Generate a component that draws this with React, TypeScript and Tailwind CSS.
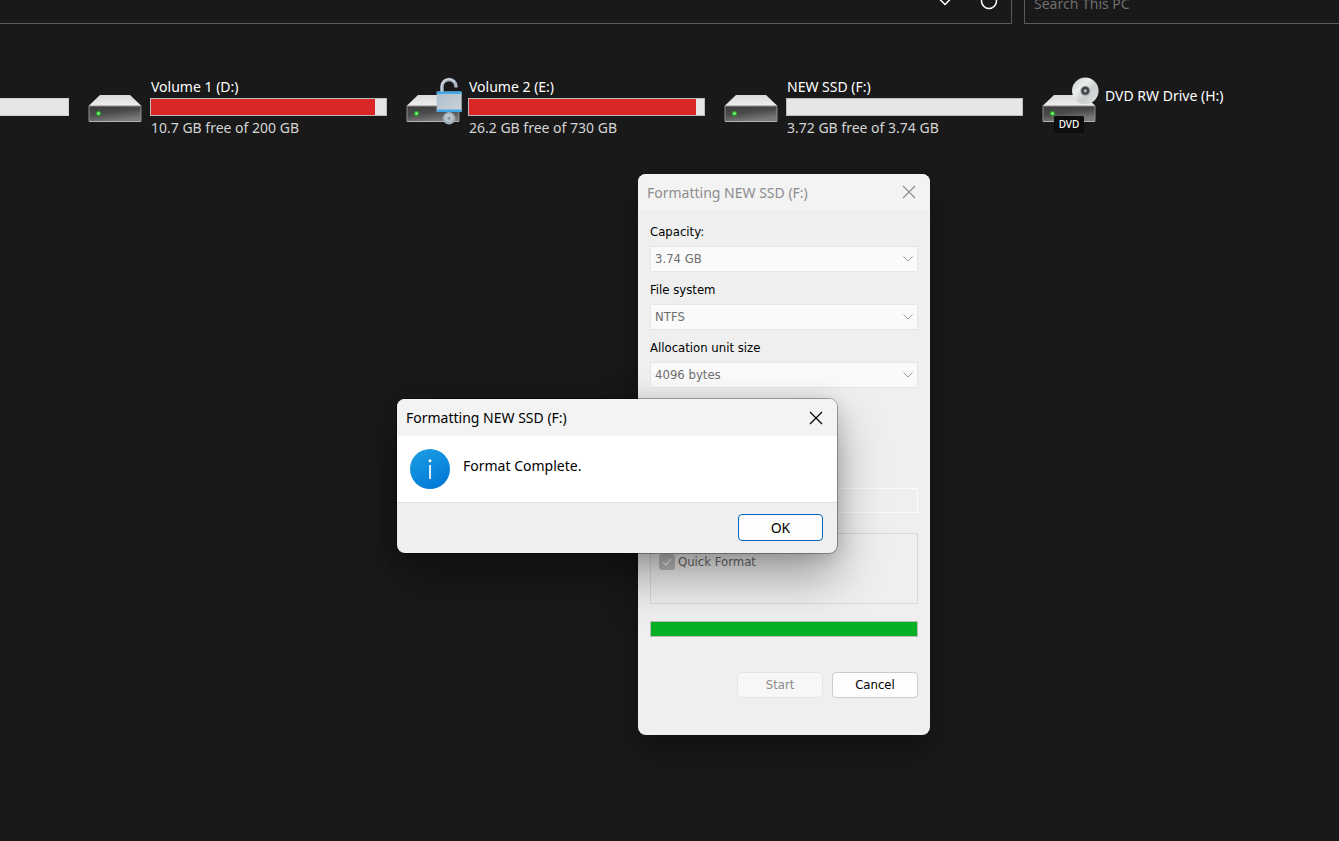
import type { ReactNode } from "react";

type Drive = {
  name: string;
  caption: string;
  used: number;
  locked?: boolean;
};

const drives: Drive[] = [
  { name: "Volume 1 (D:)", caption: "10.7 GB free of 200 GB", used: 95.5 },
  { name: "Volume 2 (E:)", caption: "26.2 GB free of 730 GB", used: 96.5, locked: true },
  { name: "NEW SSD (F:)", caption: "3.72 GB free of 3.74 GB", used: 0 },
];

const formatFields = [
  { id: "capacity", label: "Capacity:", value: "3.74 GB" },
  { id: "file-system", label: "File system", value: "NTFS" },
  { id: "allocation", label: "Allocation unit size", value: "4096 bytes" },
];

function DriveIcon({ id, children }: { id: string; children?: ReactNode }) {
  return (
    <svg viewBox="0 0 58 60" className="-mr-1 h-[60px] w-[58px] shrink-0" aria-hidden="true">
      <defs>
        <linearGradient id={`${id}-top`} x1="0" y1="0" x2="0" y2="1">
          <stop offset="0" stopColor="#d9d9dc" />
          <stop offset="1" stopColor="#efeff1" />
        </linearGradient>
        <linearGradient id={`${id}-front`} x1="0" y1="0" x2="0.4" y2="1">
          <stop offset="0" stopColor="#3c3c3c" />
          <stop offset="0.5" stopColor="#4a4a4a" />
          <stop offset="1" stopColor="#7a7a7a" />
        </linearGradient>
        <radialGradient id={`${id}-led`}>
          <stop offset="0" stopColor="#b8ffb0" />
          <stop offset="0.45" stopColor="#2fd22f" />
          <stop offset="1" stopColor="#1a7a1a" stopOpacity="0" />
        </radialGradient>
      </defs>
      <path d="M12 18h30l11.500 11H0.500z" fill={`url(#${id}-top)`} />
      <rect x="1" y="29" width="52" height="15.500" rx="0.5" fill={`url(#${id}-front)`} stroke="#8f8f8f" />
      <path d="M1 44.500h52" stroke="#b4b4b4" />
      <circle cx="10.500" cy="36.500" r="3.4" fill={`url(#${id}-led)`} />
      {children}
    </svg>
  );
}

function OpenPadlock() {
  return (
    <g>
      <defs>
        <linearGradient id="lock-body" x1="0" y1="0" x2="1" y2="1">
          <stop offset="0" stopColor="#a9bccb" />
          <stop offset="1" stopColor="#cfd3d8" />
        </linearGradient>
      </defs>
      <path d="M36 15.500V9.500a7 7 0 0 1 14 0v1" fill="none" stroke="#a9b4c4" strokeWidth="3.4" />
      <path d="M35.500 14.500V9a7.500 7.500 0 0 1 13-4.500" fill="none" stroke="#d5dce6" strokeWidth="1.2" />
      <rect x="30.700" y="14.500" width="25" height="20.500" rx="0.8" fill="url(#lock-body)" />
      <rect x="30.700" y="14.500" width="25" height="2.400" fill="#3fa9e8" />
      <rect x="30.700" y="32.600" width="25" height="2.400" fill="#3fa9e8" />
      <circle cx="43" cy="41.300" r="6.200" fill="#a3b0ba" />
      <circle cx="43" cy="40.800" r="4" fill="#bcc7cf" />
      <circle cx="43" cy="41.300" r="1.500" fill="#8694a0" />
    </g>
  );
}

function Disc() {
  return (
    <g>
      <defs>
        <linearGradient id="disc-face" x1="0" y1="0" x2="1" y2="1">
          <stop offset="0" stopColor="#c3c8c8" />
          <stop offset="0.35" stopColor="#eceeee" />
          <stop offset="0.6" stopColor="#c7cccc" />
          <stop offset="1" stopColor="#e6e8e8" />
        </linearGradient>
      </defs>
      <circle cx="43.300" cy="13.800" r="13.300" fill="url(#disc-face)" />
      <circle cx="43.300" cy="13.800" r="4.800" fill="#7d8485" />
      <circle cx="43.300" cy="13.800" r="3.700" fill="#3c4244" />
      <circle cx="43.300" cy="13.800" r="1.700" fill="#a9afb0" />
      <rect x="12" y="39" width="30" height="17" rx="1.500" fill="#0d0d0d" />
      <text
        x="27"
        y="51"
        textAnchor="middle"
        fill="#ffffff"
        fontSize="10"
        fontFamily="'Noto Sans', sans-serif"
        fontWeight="500"
      >
        DVD
      </text>
    </g>
  );
}

function CloseIcon() {
  return (
    <svg viewBox="0 0 14 14" className="size-[14px]" fill="none" stroke="currentColor" strokeWidth="1.2" aria-hidden="true">
      <path d="M1 1l12 12M13 1L1 13" />
    </svg>
  );
}

function ExplorerBar() {
  return (
    <header className="flex h-6 items-end gap-3 overflow-hidden">
      <div className="flex h-[42px] w-[1012px] shrink-0 items-center justify-end gap-6 border border-l-0 border-[#5a5a5a] pr-3 text-white">
        <button type="button" aria-label="Previous locations" className="flex size-5 items-center justify-center">
          <svg viewBox="0 0 12 8" className="h-2 w-3" fill="none" stroke="currentColor" strokeWidth="1.500">
            <path d="M1 0.500l5 5 5-5" />
          </svg>
        </button>
        <button type="button" aria-label="Refresh" className="flex size-5 items-center justify-center">
          <svg viewBox="0 0 20 20" className="size-5" fill="none" stroke="currentColor" strokeWidth="1.500">
            <path d="M14.500 2A7.500 7.500 0 1 1 5.500 2M14.500 -1v4h-4" />
          </svg>
        </button>
      </div>
      <input
        type="search"
        aria-label="Search This PC"
        placeholder="Search This PC"
        className="h-[42px] min-w-0 flex-1 border border-r-0 border-[#5a5a5a] bg-transparent px-[9px] text-[14px] text-white outline-none placeholder:text-[#6e6e6e]"
      />
    </header>
  );
}

function DriveTile({ drive, id }: { drive: Drive; id: string }) {
  return (
    <li className="flex w-[299px] shrink-0 gap-2">
      <DriveIcon id={id}>{drive.locked && <OpenPadlock />}</DriveIcon>
      <div className="min-w-0 flex-1 text-[14px] leading-5">
        <p className="pl-px text-white">{drive.name}</p>
        <div className="mt-px h-[18px] border border-[#bcbcbc] bg-[#e6e6e6]">
          <div className="h-full bg-[#da2626]" style={{ width: `${drive.used}%` }} />
        </div>
        <p className="pl-px pt-[2px] text-[#d4d4d4]">{drive.caption}</p>
      </div>
    </li>
  );
}

function FormatWindow() {
  return (
    <section
      aria-label="Formatting options"
      className="absolute left-[638px] top-[174px] w-[292px] overflow-hidden rounded-lg bg-[#efefef] pb-[37px] font-['DejaVu_Sans_Condensed','DejaVu_Sans',sans-serif] text-[13px] text-black shadow-[0_16px_32px_rgba(0,0,0,0.35)]"
    >
      <div className="flex h-9 items-center justify-between bg-[#f3f3f3] pl-[9px] pr-[14px] text-[#8d8d8d]">
        <h2 className="font-['Noto_Sans',sans-serif] text-[14px]">Formatting NEW SSD (F:)</h2>
        <button type="button" aria-label="Close formatting options">
          <CloseIcon />
        </button>
      </div>
      <form className="px-3 pt-3">
        {formatFields.map((field) => (
          <div key={field.id} className="mb-2">
            <label htmlFor={field.id} className="block h-6 leading-5">
              {field.label}
            </label>
            <div className="relative h-[26px]">
              <select
                id={field.id}
                disabled
                className="h-full w-full appearance-none border border-[#e6e6e6] bg-[#fafafa] px-1 text-[#6e6e6e] opacity-100"
              >
                <option>{field.value}</option>
              </select>
              <svg
                viewBox="0 0 10 6"
                className="pointer-events-none absolute right-[5px] top-[10px] h-[6px] w-[10px]"
                fill="none"
                stroke="#9c9c9c"
              >
                <path d="M0.500 0.500L5 5l4.500-4.500" />
              </svg>
            </div>
          </div>
        ))}
        <input
          type="text"
          aria-label="Volume label"
          disabled
          className="mt-[100px] block h-[25px] w-full border border-[#fbfbfb] bg-[#efefef] px-1"
        />
        <fieldset className="mt-5 h-[71px] border border-[#d9d9d9] px-2 pt-5">
          <label className="flex h-4 items-center gap-[3px] text-[#6a6a6a]">
            <input type="checkbox" checked disabled readOnly className="peer sr-only" />
            <span className="flex size-4 items-center justify-center rounded-[3px] bg-[#bcbcbc]">
              <svg viewBox="0 0 10 8" className="h-2 w-[10px]" fill="none" stroke="#f1f1f1" strokeWidth="1.200">
                <path d="M1 4l3 3 5-6" />
              </svg>
            </span>
            Quick Format
          </label>
        </fieldset>
        <div
          role="progressbar"
          aria-label="Format progress"
          aria-valuenow={100}
          className="mt-[17px] h-4 border border-[#bcbcbc] bg-[#06b025]"
        />
        <div className="mt-[35px] flex justify-end gap-[9px]">
          <button type="button" disabled className="h-[26px] w-[86px] rounded border border-[#e4e4e4] bg-[#f7f7f7] text-[#8a8a8a]">
            Start
          </button>
          <button type="button" className="h-[26px] w-[86px] rounded border border-[#cccccc] bg-[#fdfdfd]">
            Cancel
          </button>
        </div>
      </form>
    </section>
  );
}

function CompleteDialog() {
  return (
    <section
      role="dialog"
      aria-labelledby="complete-title"
      className="absolute left-[397px] top-[399px] w-[440px] overflow-hidden rounded-lg bg-[#f0f0f0] text-[14px] text-black shadow-[0_0_0_1px_rgba(0,0,0,0.3),0_24px_48px_rgba(0,0,0,0.35),0_2px_20px_rgba(0,0,0,0.15)]"
    >
      <div className="flex h-[37px] items-center justify-between bg-[#f3f3f3] pl-[9px] pr-[14px]">
        <h2 id="complete-title">Formatting NEW SSD (F:)</h2>
        <button type="button" aria-label="Close">
          <CloseIcon />
        </button>
      </div>
      <div className="flex h-[67px] gap-[13px] border-b border-[#dfdfdf] bg-white px-[13px] pt-[13px]">
        <svg viewBox="0 0 40 40" className="size-10 shrink-0" aria-hidden="true">
          <defs>
            <linearGradient id="info-fill" x1="0.2" y1="0" x2="0.7" y2="1">
              <stop offset="0" stopColor="#1b9de2" />
              <stop offset="1" stopColor="#0078d7" />
            </linearGradient>
          </defs>
          <circle cx="20" cy="20" r="20" fill="url(#info-fill)" />
          <circle cx="20" cy="11.800" r="1.500" fill="#ffffff" />
          <rect x="19.200" y="16" width="1.700" height="14" fill="#ffffff" />
        </svg>
        <p className="pt-[7px] leading-5">Format Complete.</p>
      </div>
      <div className="flex justify-end px-[14px] pb-3 pt-[11px]">
        <button type="button" className="h-[27px] w-[85px] rounded border border-[#0067c0] bg-[#fdfdfd]">
          OK
        </button>
      </div>
    </section>
  );
}

export default function App() {
  return (
    <div className="relative min-h-screen overflow-hidden bg-[#191919] font-['Noto_Sans',sans-serif]">
      <ExplorerBar />
      <main className="pt-[53px]">
        <ul className="flex gap-[19px]">
          <li className="w-[69px] shrink-0 pt-[21px]">
            <div className="h-[18px] border border-l-0 border-[#d0d0d0] bg-[#e6e6e6]" />
          </li>
          {drives.map((drive, index) => (
            <DriveTile key={drive.name} drive={drive} id={`drive-${index}`} />
          ))}
          <li className="flex gap-[9px]">
            <DriveIcon id="dvd">
              <Disc />
            </DriveIcon>
            <p className="whitespace-nowrap pt-[9px] text-[14px] leading-5 text-white">DVD RW Drive (H:)</p>
          </li>
        </ul>
      </main>
      <FormatWindow />
      <CompleteDialog />
    </div>
  );
}
